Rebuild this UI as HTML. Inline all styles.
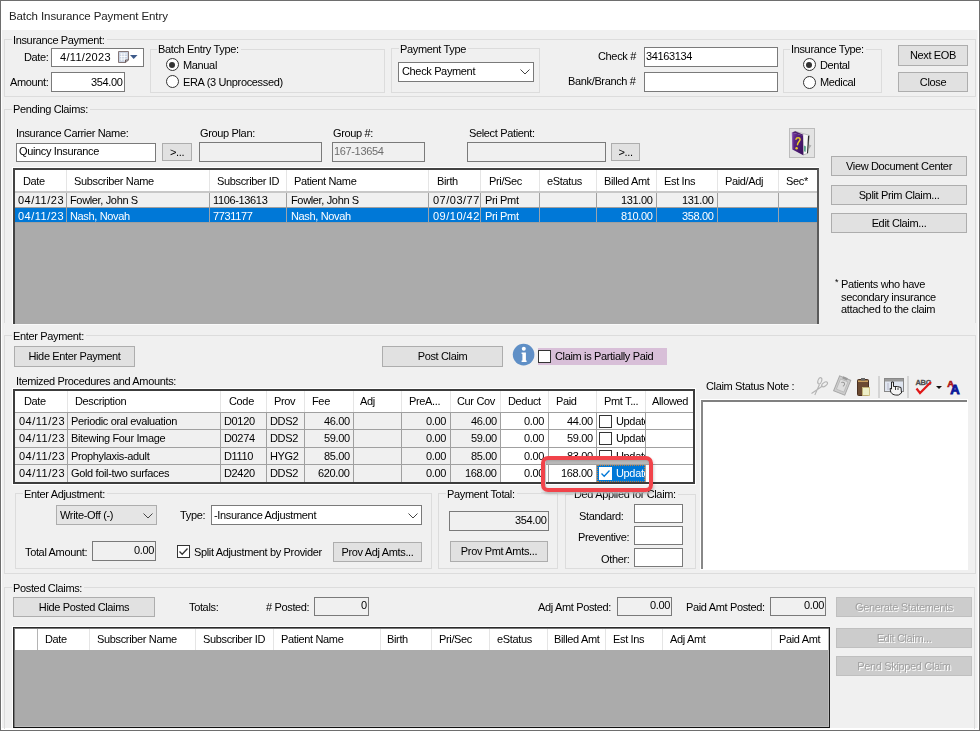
<!DOCTYPE html><html><head><meta charset="utf-8"><style>
html,body{margin:0;padding:0;}
body{width:980px;height:731px;position:relative;overflow:hidden;background:#f0f0f0;font-family:"Liberation Sans",sans-serif;font-size:11px;color:#000;}
.t{position:absolute;white-space:nowrap;line-height:13px;letter-spacing:-0.35px;will-change:transform;}
.btn{position:absolute;box-sizing:border-box;text-align:center;white-space:nowrap;letter-spacing:-0.35px;font-size:11px;will-change:transform;}
.radio{position:absolute;width:13px;height:13px;box-sizing:border-box;border:1px solid #333;border-radius:50%;background:#fff;}
.radio .dot{position:absolute;left:2.5px;top:2.5px;width:6px;height:6px;border-radius:50%;background:#333;}
</style></head><body>
<div style="position:absolute;left:0px;top:0px;width:980px;height:731px;box-sizing:border-box;border:1px solid #6e6e6e;background:#f0f0f0;"></div>
<div style="position:absolute;left:1px;top:1px;width:978px;height:29px;background:#ffffff;"></div>
<div style="position:absolute;left:1px;top:30px;width:1px;height:700px;background:#ffffff;"></div>
<div style="position:absolute;left:977px;top:30px;width:1px;height:700px;background:#f6f6f6;"></div>
<div style="position:absolute;left:978px;top:30px;width:1px;height:700px;background:#ffffff;"></div>
<div style="position:absolute;left:1px;top:728px;width:978px;height:2px;background:#ffffff;"></div>
<div class="t" style="top:10px;left:9px;color:#222;font-size:11.5px;letter-spacing:-0.1px;">Batch Insurance Payment Entry</div>
<div style="position:absolute;left:4px;top:39px;width:972px;height:58px;border:1px solid #dcdcdc;box-sizing:border-box;"></div>
<div class="t" style="top:34px;left:13px;background:#f0f0f0;padding:0 2px 0 1px;margin-left:-1px;">Insurance Payment:</div>
<div class="t" style="top:51px;right:931px;">Date:</div>
<div style="position:absolute;left:51px;top:48px;width:93px;height:19px;background:#fff;border:1px solid #7a7a7a;box-sizing:border-box;"></div>
<div class="t" style="top:51px;left:60px;letter-spacing:0.3px;">4/11/2023</div>
<svg style="position:absolute;left:117px;top:50px" width="22" height="14" viewBox="117 50 22 14">
<path d="M118.5 51.5 L128.5 51.5 L128.5 60 L125.5 62.5 L118.5 62.5 Z" fill="#c9d2e2" stroke="#857777" stroke-width="1"/>
<path d="M120 54 L127 54 M120 56.5 L127 56.5 M120 59 L127 59 M121.7 53 L121.7 61 M124.3 53 L124.3 61" stroke="#ffffff" stroke-width="0.8"/>
<path d="M125.5 62.5 L125.5 60 L128.5 60" fill="none" stroke="#6a5a5a" stroke-width="1"/>
<path d="M130 55 L137.5 55 L133.7 59 Z" fill="#3d5a8a"/>
</svg>
<div class="t" style="top:76px;right:931px;">Amount:</div>
<div style="position:absolute;left:51px;top:72px;width:74px;height:20px;background:#fff;border:1px solid #7a7a7a;box-sizing:border-box;"></div>
<div class="t" style="top:76px;right:857px;">354.00</div>
<div style="position:absolute;left:150px;top:49px;width:235px;height:44px;border:1px solid #dcdcdc;box-sizing:border-box;"></div>
<div class="t" style="top:43px;left:158px;background:#f0f0f0;padding:0 2px 0 1px;margin-left:-1px;">Batch Entry Type:</div>
<div class="radio" style="left:165.5px;top:58.0px;"><div class="dot"></div></div>
<div class="t" style="top:59px;left:183px;">Manual</div>
<div class="radio" style="left:165.5px;top:75.0px;"></div>
<div class="t" style="top:76px;left:183px;">ERA (3 Unprocessed)</div>
<div style="position:absolute;left:391px;top:48px;width:149px;height:45px;border:1px solid #dcdcdc;box-sizing:border-box;"></div>
<div class="t" style="top:43px;left:400px;background:#f0f0f0;padding:0 2px 0 1px;margin-left:-1px;">Payment Type</div>
<div style="position:absolute;left:398px;top:62px;width:136px;height:20px;background:#fff;border:1px solid #7a7a7a;box-sizing:border-box;"></div>
<div class="t" style="top:65px;left:402px;">Check Payment</div>
<svg style="position:absolute;left:519.5px;top:69px" width="10" height="6"><path d="M0.5 0.5 L5 5 L9.5 0.5" stroke="#444" stroke-width="1" fill="none"/></svg>
<div class="t" style="top:50px;right:344px;">Check #</div>
<div style="position:absolute;left:644px;top:47px;width:134px;height:20px;background:#fff;border:1px solid #7a7a7a;box-sizing:border-box;"></div>
<div class="t" style="top:50px;left:646px;">34163134</div>
<div class="t" style="top:75px;right:344px;">Bank/Branch #</div>
<div style="position:absolute;left:644px;top:72px;width:134px;height:20px;background:#fff;border:1px solid #7a7a7a;box-sizing:border-box;"></div>
<div style="position:absolute;left:783px;top:49px;width:99px;height:44px;border:1px solid #dcdcdc;box-sizing:border-box;"></div>
<div class="t" style="top:43px;left:791px;background:#f0f0f0;padding:0 2px 0 1px;margin-left:-1px;">Insurance Type:</div>
<div class="radio" style="left:802.5px;top:58.0px;"><div class="dot"></div></div>
<div class="t" style="top:59px;left:820px;">Dental</div>
<div class="radio" style="left:802.5px;top:75.5px;"></div>
<div class="t" style="top:76px;left:820px;">Medical</div>
<div class="btn" style="left:898px;top:45px;width:70px;height:21px;line-height:19px;background:#e1e1e1;border:1px solid #adadad;color:#000;">Next EOB</div>
<div class="btn" style="left:898px;top:72px;width:70px;height:20px;line-height:18px;background:#e1e1e1;border:1px solid #adadad;color:#000;">Close</div>
<div style="position:absolute;left:4px;top:109px;width:972px;height:214px;border:1px solid #dcdcdc;border-bottom:none;box-sizing:border-box;"></div>
<div class="t" style="top:103px;left:12.5px;background:#f0f0f0;padding:0 2px 0 1px;margin-left:-1px;">Pending Claims:</div>
<div class="t" style="top:127px;left:16px;">Insurance Carrier Name:</div>
<div style="position:absolute;left:16px;top:143px;width:140px;height:19px;background:#fff;border:1px solid #7a7a7a;box-sizing:border-box;"></div>
<div class="t" style="top:145px;left:19px;">Quincy Insurance</div>
<div class="btn" style="left:162px;top:143px;width:30px;height:18px;line-height:16px;background:#e1e1e1;border:1px solid #adadad;color:#000;">&gt;...</div>
<div class="t" style="top:127px;left:200px;">Group Plan:</div>
<div style="position:absolute;left:199px;top:142px;width:123px;height:20px;background:#f0f0f0;border:1px solid #7a7a7a;box-sizing:border-box;"></div>
<div class="t" style="top:127px;left:333px;">Group #:</div>
<div style="position:absolute;left:332px;top:142px;width:93px;height:20px;background:#f0f0f0;border:1px solid #7a7a7a;box-sizing:border-box;"></div>
<div class="t" style="top:145px;left:334px;color:#6d6d6d;">167-13654</div>
<div class="t" style="top:127px;left:469px;">Select Patient:</div>
<div style="position:absolute;left:467px;top:142px;width:139px;height:20px;background:#f0f0f0;border:1px solid #7a7a7a;box-sizing:border-box;"></div>
<div class="btn" style="left:611px;top:143px;width:29px;height:18px;line-height:16px;background:#e1e1e1;border:1px solid #adadad;color:#000;">&gt;...</div>
<div style="position:absolute;left:789px;top:128px;width:26px;height:30px;background:#e3e3e3;border:1px solid #bcbcbc;box-sizing:border-box;"></div>
<svg style="position:absolute;left:786px;top:125px" width="32" height="36" viewBox="0 0 32 36">
<defs><linearGradient id="bk" x1="0" y1="0" x2="1" y2="0.6"><stop offset="0" stop-color="#7d45a8"/><stop offset="0.35" stop-color="#5b2585"/><stop offset="1" stop-color="#3f1462"/></linearGradient></defs>
<path d="M23 19.5 L25.5 20.5 L23 24 Z" fill="#b0b0b0"/>
<path d="M9 6.3 L23.3 10.3 L21.8 28.2 L17.3 30 L17 10.6 Z" fill="#f6f6f6" stroke="#8a8a8a" stroke-width="0.5"/>
<path d="M22 10.8 L23.3 10.8 L22 28 L21 28.4 Z" fill="#2a2a2a"/>
<path d="M18 20.5 L20 21.5 L19.6 27 L18 26.2 Z" fill="#5aa88a"/>
<path d="M5.8 7.4 L9 6.3 L17.5 9.8 L17 10.6 Z" fill="#4e1f70"/>
<path d="M5.8 7.4 L17 10.6 L17.3 30.2 L6.4 24.4 Z" fill="url(#bk)"/>
<path d="M6.2 8 L7 8.3 L7.3 24.2 L6.5 23.9 Z" fill="#9a6cc0" opacity="0.8"/>
<path d="M10 14.3 C10.2 12.2 14 12 14.1 14.3 C14.2 16.2 11.7 16.8 11.5 19.8" stroke="#e8cc28" stroke-width="1.5" fill="none" stroke-linecap="round"/>
<circle cx="10.6" cy="23.3" r="1.2" fill="#e8cc28"/>
</svg>
<div class="btn" style="left:831px;top:156px;width:136px;height:20px;line-height:18px;background:#e1e1e1;border:1px solid #adadad;color:#000;">View Document Center</div>
<div class="btn" style="left:831px;top:185px;width:136px;height:20px;line-height:18px;background:#e1e1e1;border:1px solid #adadad;color:#000;">Split Prim Claim...</div>
<div class="btn" style="left:831px;top:213px;width:136px;height:20px;line-height:18px;background:#e1e1e1;border:1px solid #adadad;color:#000;">Edit Claim...</div>
<div class="t" style="top:276px;left:835px;font-size:9px;">*</div>
<div class="t" style="top:278px;left:841px;">Patients who have</div>
<div class="t" style="top:291px;left:841px;">secondary insurance</div>
<div class="t" style="top:303px;left:841px;">attached to the claim</div>
<div style="position:absolute;left:12px;top:167px;width:807px;height:157px;background:#ffffff;"></div>
<div style="position:absolute;left:13px;top:324px;width:806px;height:1px;background:#f8f8f8;"></div>
<div style="position:absolute;left:13px;top:168px;width:806px;height:156px;background:#ababab;border-top:2px solid #434343;border-left:2px solid #434343;border-right:2px solid #5a5a5a;box-sizing:border-box;"></div>
<div style="position:absolute;left:15px;top:170px;width:802px;height:21px;background:#ffffff;"></div>
<div style="position:absolute;left:66px;top:170px;width:1px;height:21px;background:#e5e5e5;"></div>
<div style="position:absolute;left:209px;top:170px;width:1px;height:21px;background:#e5e5e5;"></div>
<div style="position:absolute;left:286px;top:170px;width:1px;height:21px;background:#e5e5e5;"></div>
<div style="position:absolute;left:428px;top:170px;width:1px;height:21px;background:#e5e5e5;"></div>
<div style="position:absolute;left:480px;top:170px;width:1px;height:21px;background:#e5e5e5;"></div>
<div style="position:absolute;left:539px;top:170px;width:1px;height:21px;background:#e5e5e5;"></div>
<div style="position:absolute;left:596px;top:170px;width:1px;height:21px;background:#e5e5e5;"></div>
<div style="position:absolute;left:656px;top:170px;width:1px;height:21px;background:#e5e5e5;"></div>
<div style="position:absolute;left:717px;top:170px;width:1px;height:21px;background:#e5e5e5;"></div>
<div style="position:absolute;left:778px;top:170px;width:1px;height:21px;background:#e5e5e5;"></div>
<div class="t" style="top:175px;left:22.5px;">Date</div>
<div class="t" style="top:175px;left:73.5px;">Subscriber Name</div>
<div class="t" style="top:175px;left:216.5px;">Subscriber ID</div>
<div class="t" style="top:175px;left:294px;">Patient Name</div>
<div class="t" style="top:175px;left:436.5px;">Birth</div>
<div class="t" style="top:175px;left:488.5px;">Pri/Sec</div>
<div class="t" style="top:175px;left:546.5px;">eStatus</div>
<div class="t" style="top:175px;left:603.5px;">Billed Amt</div>
<div class="t" style="top:175px;left:664px;">Est Ins</div>
<div class="t" style="top:175px;left:725px;">Paid/Adj</div>
<div class="t" style="top:175px;left:785.5px;">Sec*</div>
<div style="position:absolute;left:15px;top:191px;width:802px;height:2px;background:#c8c8c8;"></div>
<div style="position:absolute;left:15px;top:193px;width:802px;height:14px;background:#f0f0f0;"></div>
<div style="position:absolute;left:15px;top:207px;width:802px;height:1px;background:#a0a0a0;"></div>
<div style="position:absolute;left:15px;top:208px;width:802px;height:14px;background:#0078d7;"></div>
<div style="position:absolute;left:15px;top:222px;width:802px;height:1px;background:#a0a0a0;"></div>
<div style="position:absolute;left:66px;top:193px;width:1px;height:14px;background:#a0a0a0;"></div>
<div style="position:absolute;left:66px;top:208px;width:1px;height:14px;background:#9aa4ae;"></div>
<div style="position:absolute;left:209px;top:193px;width:1px;height:14px;background:#a0a0a0;"></div>
<div style="position:absolute;left:209px;top:208px;width:1px;height:14px;background:#9aa4ae;"></div>
<div style="position:absolute;left:286px;top:193px;width:1px;height:14px;background:#a0a0a0;"></div>
<div style="position:absolute;left:286px;top:208px;width:1px;height:14px;background:#9aa4ae;"></div>
<div style="position:absolute;left:428px;top:193px;width:1px;height:14px;background:#a0a0a0;"></div>
<div style="position:absolute;left:428px;top:208px;width:1px;height:14px;background:#9aa4ae;"></div>
<div style="position:absolute;left:480px;top:193px;width:1px;height:14px;background:#a0a0a0;"></div>
<div style="position:absolute;left:480px;top:208px;width:1px;height:14px;background:#9aa4ae;"></div>
<div style="position:absolute;left:539px;top:193px;width:1px;height:14px;background:#a0a0a0;"></div>
<div style="position:absolute;left:539px;top:208px;width:1px;height:14px;background:#9aa4ae;"></div>
<div style="position:absolute;left:596px;top:193px;width:1px;height:14px;background:#a0a0a0;"></div>
<div style="position:absolute;left:596px;top:208px;width:1px;height:14px;background:#9aa4ae;"></div>
<div style="position:absolute;left:656px;top:193px;width:1px;height:14px;background:#a0a0a0;"></div>
<div style="position:absolute;left:656px;top:208px;width:1px;height:14px;background:#9aa4ae;"></div>
<div style="position:absolute;left:717px;top:193px;width:1px;height:14px;background:#a0a0a0;"></div>
<div style="position:absolute;left:717px;top:208px;width:1px;height:14px;background:#9aa4ae;"></div>
<div style="position:absolute;left:778px;top:193px;width:1px;height:14px;background:#a0a0a0;"></div>
<div style="position:absolute;left:778px;top:208px;width:1px;height:14px;background:#9aa4ae;"></div>
<div class="t" style="top:194px;left:18px;letter-spacing:0.5px;">04/11/23</div>
<div class="t" style="top:194px;left:70px;">Fowler, John S</div>
<div class="t" style="top:194px;left:212.5px;">1106-13613</div>
<div class="t" style="top:194px;left:290.5px;">Fowler, John S</div>
<div class="t" style="top:194px;left:432.5px;letter-spacing:0.5px;">07/03/77</div>
<div class="t" style="top:194px;left:485px;">Pri Pmt</div>
<div class="t" style="top:194px;right:327px;">131.00</div>
<div class="t" style="top:194px;right:266px;">131.00</div>
<div class="t" style="top:210px;left:18px;color:#ffffff;letter-spacing:0.5px;">04/11/23</div>
<div class="t" style="top:210px;left:70px;color:#ffffff;">Nash, Novah</div>
<div class="t" style="top:210px;left:212.5px;color:#ffffff;">7731177</div>
<div class="t" style="top:210px;left:290.5px;color:#ffffff;">Nash, Novah</div>
<div class="t" style="top:210px;left:432.5px;color:#ffffff;letter-spacing:0.5px;">09/10/42</div>
<div class="t" style="top:210px;left:485px;color:#ffffff;">Pri Pmt</div>
<div class="t" style="top:210px;right:327px;color:#ffffff;">810.00</div>
<div class="t" style="top:210px;right:266px;color:#ffffff;">358.00</div>
<div style="position:absolute;left:4px;top:335px;width:972px;height:239px;border:1px solid #dcdcdc;box-sizing:border-box;"></div>
<div class="t" style="top:330px;left:13px;background:#f0f0f0;padding:0 2px 0 1px;margin-left:-1px;">Enter Payment:</div>
<div class="btn" style="left:14px;top:346px;width:121px;height:21px;line-height:19px;background:#e1e1e1;border:1px solid #adadad;color:#000;">Hide Enter Payment</div>
<div class="btn" style="left:382px;top:346px;width:121px;height:21px;line-height:19px;background:#e1e1e1;border:1px solid #adadad;color:#000;">Post Claim</div>
<svg style="position:absolute;left:512px;top:343px" width="24" height="24" viewBox="0 0 24 24">
<circle cx="11.6" cy="11.6" r="10.8" fill="#5f8fc6"/>
<circle cx="11.8" cy="5.8" r="2" fill="#fff"/>
<path d="M9.6 9.6 L13.9 9.6 L13.9 17.6 L14.6 17.6 L14.6 19 L9.6 19 L9.6 17.6 L10.4 17.6 L10.4 11 L9.6 11 Z" fill="#fff"/>
</svg>
<div style="position:absolute;left:538px;top:348px;width:129px;height:17px;background:#d8bfd8;"></div>
<div style="position:absolute;left:538px;top:350px;width:13px;height:13px;box-sizing:border-box;border:1px solid #333;background:#fff;"></div>
<div class="t" style="top:350px;left:555px;">Claim is Partially Paid</div>
<div class="t" style="top:375px;left:16px;">Itemized Procedures and Amounts:</div>
<div style="position:absolute;left:12px;top:388px;width:684px;height:97px;background:#ffffff;"></div>
<div style="position:absolute;left:13px;top:389px;width:682px;height:95px;background:#ffffff;border:2px solid #3c3c3c;box-sizing:border-box;"></div>
<div style="position:absolute;left:67px;top:391px;width:1px;height:21px;background:#e5e5e5;"></div>
<div style="position:absolute;left:220px;top:391px;width:1px;height:21px;background:#e5e5e5;"></div>
<div style="position:absolute;left:266px;top:391px;width:1px;height:21px;background:#e5e5e5;"></div>
<div style="position:absolute;left:304px;top:391px;width:1px;height:21px;background:#e5e5e5;"></div>
<div style="position:absolute;left:353px;top:391px;width:1px;height:21px;background:#e5e5e5;"></div>
<div style="position:absolute;left:401px;top:391px;width:1px;height:21px;background:#e5e5e5;"></div>
<div style="position:absolute;left:450px;top:391px;width:1px;height:21px;background:#e5e5e5;"></div>
<div style="position:absolute;left:500px;top:391px;width:1px;height:21px;background:#e5e5e5;"></div>
<div style="position:absolute;left:548px;top:391px;width:1px;height:21px;background:#e5e5e5;"></div>
<div style="position:absolute;left:596px;top:391px;width:1px;height:21px;background:#e5e5e5;"></div>
<div style="position:absolute;left:645px;top:391px;width:1px;height:21px;background:#e5e5e5;"></div>
<div class="t" style="top:395px;left:23.5px;">Date</div>
<div class="t" style="top:395px;left:74.5px;">Description</div>
<div class="t" style="top:395px;left:228.5px;">Code</div>
<div class="t" style="top:395px;left:274px;">Prov</div>
<div class="t" style="top:395px;left:312px;">Fee</div>
<div class="t" style="top:395px;left:360px;">Adj</div>
<div class="t" style="top:395px;left:409px;">PreA...</div>
<div class="t" style="top:395px;left:457px;">Cur Cov</div>
<div class="t" style="top:395px;left:507.5px;">Deduct</div>
<div class="t" style="top:395px;left:556px;">Paid</div>
<div class="t" style="top:395px;left:604px;">Pmt T...</div>
<div class="t" style="top:395px;left:651.5px;">Allowed</div>
<div style="position:absolute;left:15px;top:413px;width:485px;height:16px;background:#f0f0f0;"></div>
<div style="position:absolute;left:15px;top:430px;width:485px;height:17px;background:#f0f0f0;"></div>
<div style="position:absolute;left:15px;top:448px;width:485px;height:16px;background:#f0f0f0;"></div>
<div style="position:absolute;left:15px;top:465px;width:485px;height:17px;background:#f0f0f0;"></div>
<div style="position:absolute;left:15px;top:412px;width:678px;height:1px;background:#a0a0a0;"></div>
<div style="position:absolute;left:15px;top:429px;width:678px;height:1px;background:#a0a0a0;"></div>
<div style="position:absolute;left:15px;top:447px;width:678px;height:1px;background:#a0a0a0;"></div>
<div style="position:absolute;left:15px;top:464px;width:678px;height:1px;background:#a0a0a0;"></div>
<div style="position:absolute;left:67px;top:412px;width:1px;height:70px;background:#a0a0a0;"></div>
<div style="position:absolute;left:220px;top:412px;width:1px;height:70px;background:#a0a0a0;"></div>
<div style="position:absolute;left:266px;top:412px;width:1px;height:70px;background:#a0a0a0;"></div>
<div style="position:absolute;left:304px;top:412px;width:1px;height:70px;background:#a0a0a0;"></div>
<div style="position:absolute;left:353px;top:412px;width:1px;height:70px;background:#a0a0a0;"></div>
<div style="position:absolute;left:401px;top:412px;width:1px;height:70px;background:#a0a0a0;"></div>
<div style="position:absolute;left:450px;top:412px;width:1px;height:70px;background:#a0a0a0;"></div>
<div style="position:absolute;left:500px;top:412px;width:1px;height:70px;background:#a0a0a0;"></div>
<div style="position:absolute;left:548px;top:412px;width:1px;height:70px;background:#a0a0a0;"></div>
<div style="position:absolute;left:596px;top:412px;width:1px;height:70px;background:#a0a0a0;"></div>
<div style="position:absolute;left:645px;top:412px;width:1px;height:70px;background:#a0a0a0;"></div>
<div class="t" style="top:415px;left:19px;letter-spacing:0.5px;">04/11/23</div>
<div class="t" style="top:415px;left:71px;">Periodic oral evaluation</div>
<div class="t" style="top:415px;left:224px;">D0120</div>
<div class="t" style="top:415px;left:270px;">DDS2</div>
<div class="t" style="top:415px;right:630.5px;">46.00</div>
<div class="t" style="top:415px;right:533.5px;">0.00</div>
<div class="t" style="top:415px;right:483.5px;">46.00</div>
<div class="t" style="top:415px;right:436px;">0.00</div>
<div class="t" style="top:415px;right:387px;">44.00</div>
<div class="t" style="top:432px;left:19px;letter-spacing:0.5px;">04/11/23</div>
<div class="t" style="top:432px;left:71px;">Bitewing Four Image</div>
<div class="t" style="top:432px;left:224px;">D0274</div>
<div class="t" style="top:432px;left:270px;">DDS2</div>
<div class="t" style="top:432px;right:630.5px;">59.00</div>
<div class="t" style="top:432px;right:533.5px;">0.00</div>
<div class="t" style="top:432px;right:483.5px;">59.00</div>
<div class="t" style="top:432px;right:436px;">0.00</div>
<div class="t" style="top:432px;right:387px;">59.00</div>
<div class="t" style="top:450px;left:19px;letter-spacing:0.5px;">04/11/23</div>
<div class="t" style="top:450px;left:71px;">Prophylaxis-adult</div>
<div class="t" style="top:450px;left:224px;">D1110</div>
<div class="t" style="top:450px;left:270px;">HYG2</div>
<div class="t" style="top:450px;right:630.5px;">85.00</div>
<div class="t" style="top:450px;right:533.5px;">0.00</div>
<div class="t" style="top:450px;right:483.5px;">85.00</div>
<div class="t" style="top:450px;right:436px;">0.00</div>
<div class="t" style="top:450px;right:387px;">83.00</div>
<div class="t" style="top:467px;left:19px;letter-spacing:0.5px;">04/11/23</div>
<div class="t" style="top:467px;left:71px;">Gold foil-two surfaces</div>
<div class="t" style="top:467px;left:224px;">D2420</div>
<div class="t" style="top:467px;left:270px;">DDS2</div>
<div class="t" style="top:467px;right:630.5px;">620.00</div>
<div class="t" style="top:467px;right:533.5px;">0.00</div>
<div class="t" style="top:467px;right:483.5px;">168.00</div>
<div class="t" style="top:467px;right:436px;">0.00</div>
<div class="t" style="top:467px;right:387px;">168.00</div>
<div style="position:absolute;left:599px;top:415px;width:13px;height:13px;box-sizing:border-box;border:1px solid #333;background:#fff;"></div>
<div style="position:absolute;left:613px;top:413px;width:32px;height:16px;overflow:hidden;"><div class="t" style="left:3px;top:2px;">Update</div></div>
<div style="position:absolute;left:599px;top:432px;width:13px;height:13px;box-sizing:border-box;border:1px solid #333;background:#fff;"></div>
<div style="position:absolute;left:613px;top:430px;width:32px;height:16px;overflow:hidden;"><div class="t" style="left:3px;top:2px;">Update</div></div>
<div style="position:absolute;left:599px;top:450px;width:13px;height:13px;box-sizing:border-box;border:1px solid #333;background:#fff;"></div>
<div style="position:absolute;left:613px;top:448px;width:32px;height:16px;overflow:hidden;"><div class="t" style="left:3px;top:2px;">Update</div></div>
<div style="position:absolute;left:597px;top:465px;width:48px;height:17px;background:#0078d7;outline:1px dotted #c08040;outline-offset:-1px;"></div>
<div style="position:absolute;left:599px;top:467px;width:13px;height:13px;box-sizing:border-box;border:1px solid #ffffff;background:#fff;"><svg width="13" height="13" style="position:absolute;left:-1px;top:-1px"><path d="M2.5 6.5 L5.2 9.3 L10.5 3.5" stroke="#0078d7" stroke-width="1.3" fill="none"/></svg></div>
<div style="position:absolute;left:613px;top:465px;width:32px;height:16px;overflow:hidden;"><div class="t" style="left:3px;top:2px;color:#fff;">Update</div></div>
<div class="t" style="top:380px;left:706px;">Claim Status Note :</div>
<svg style="position:absolute;left:806px;top:370px" width="164" height="30" viewBox="806 370 164 30">
<g stroke="#b4b4b4" stroke-width="1.1" fill="none">
<ellipse cx="819.8" cy="380.8" rx="1.8" ry="3.3" transform="rotate(20 819.8 380.8)"/>
<ellipse cx="824.6" cy="384.3" rx="1.8" ry="3.3" transform="rotate(55 824.6 384.3)"/>
<path d="M819.5 384.5 L814.8 395 M822.5 386 L811.5 393.5"/>
</g>
<g transform="rotate(22 842 386)">
<rect x="836" y="377.5" width="12" height="16" fill="#cdcdcd" stroke="#a8a8a8" stroke-width="1"/>
<rect x="838" y="380" width="8" height="11" fill="#dedede" stroke="#b0b0b0" stroke-width="0.6"/>
<rect x="839.5" y="376.5" width="5" height="2.5" fill="#9a9a9a"/>
<path d="M840 383 C843 381 845 383 843 386" stroke="#999" stroke-width="1" fill="none"/>
</g>
<rect x="857.5" y="379.5" width="11" height="16" rx="1" fill="#6b4a32" stroke="#4a3020" stroke-width="1"/>
<rect x="858" y="380.5" width="10" height="1.5" fill="#c8a060"/>
<rect x="861" y="378" width="4" height="2.5" fill="#666" />
<rect x="862.5" y="387.5" width="7" height="8" fill="#eef0c8" stroke="#c8b878" stroke-width="0.8"/>
<rect x="878.5" y="376" width="1" height="22" fill="#b8b8b8"/>
<rect x="884.5" y="378.5" width="19" height="13" fill="#dfe5f0" stroke="#888" stroke-width="1"/>
<rect x="885" y="379" width="18" height="2.5" fill="#9a9a9a"/>
<path d="M888 383 L888 390 M893 383 L893 390" stroke="#aab" stroke-width="0.8"/>
<path d="M891.5 382 L891.5 389 L890 388.5 L890.5 391 C891 394 894 395.5 898.5 395 L901.5 393 L901 387.5 L897.5 386.5 L893.5 386.5 L893.5 382 Z" fill="#f4f4f4" stroke="#111" stroke-width="0.9"/>
<path d="M895.5 387 L895.5 390 M898 387.5 L898 390" stroke="#111" stroke-width="0.8"/>
<rect x="907.5" y="376" width="1" height="22" fill="#b8b8b8"/>
<text x="915.5" y="385" font-family="Liberation Sans" font-weight="bold" font-size="7.5" fill="#505050" stroke="#505050" stroke-width="0.3" letter-spacing="-0.3">ABC</text>
<path d="M916.5 388.5 L920 393 L931 382" stroke="#e01818" stroke-width="2.2" fill="none"/>
<path d="M936 386 L942 386 L939 389 Z" fill="#111"/>
<text x="947.3" y="386.8" font-family="Liberation Sans" font-weight="bold" font-size="9.5" fill="#c41818" stroke="#a01010" stroke-width="0.6">A</text>
<text x="950.3" y="394" font-family="Liberation Sans" font-weight="bold" font-size="13" fill="#1020b0" stroke="#0a1690" stroke-width="0.9">A</text>
</svg>
<div style="position:absolute;left:700px;top:399px;width:268px;height:171px;background:#ffffff;"></div>
<div style="position:absolute;left:701px;top:400px;width:266px;height:169px;background:#ffffff;border-top:2px solid #808080;border-left:2px solid #888;box-sizing:border-box;"></div>
<div style="position:absolute;left:15px;top:493px;width:417px;height:76px;border:1px solid #dcdcdc;box-sizing:border-box;"></div>
<div class="t" style="top:488px;left:24px;background:#f0f0f0;padding:0 2px 0 1px;margin-left:-1px;">Enter Adjustment:</div>
<div style="position:absolute;left:56px;top:505px;width:101px;height:20px;background:#e5e5e5;border:1px solid #adadad;box-sizing:border-box;"></div>
<div class="t" style="top:509px;left:60px;">Write-Off (-)</div>
<svg style="position:absolute;left:143px;top:513px" width="10" height="6"><path d="M0.5 0.5 L5 5 L9.5 0.5" stroke="#444" stroke-width="1" fill="none"/></svg>
<div class="t" style="top:509px;left:180px;">Type:</div>
<div style="position:absolute;left:211px;top:505px;width:211px;height:20px;background:#fff;border:1px solid #7a7a7a;box-sizing:border-box;"></div>
<div class="t" style="top:509px;left:214px;">-Insurance Adjustment</div>
<svg style="position:absolute;left:408px;top:513px" width="10" height="6"><path d="M0.5 0.5 L5 5 L9.5 0.5" stroke="#444" stroke-width="1" fill="none"/></svg>
<div class="t" style="top:546px;left:25px;">Total Amount:</div>
<div style="position:absolute;left:92px;top:541px;width:64px;height:20px;background:#f0f0f0;border:1px solid #7a7a7a;box-sizing:border-box;"></div>
<div class="t" style="top:544px;right:826px;">0.00</div>
<div style="position:absolute;left:177px;top:545px;width:13px;height:13px;box-sizing:border-box;border:1px solid #333;background:#fff;"><svg width="13" height="13" style="position:absolute;left:-1px;top:-1px"><path d="M2.5 6.5 L5.2 9.3 L10.5 3.5" stroke="#333" stroke-width="1.3" fill="none"/></svg></div>
<div class="t" style="top:546px;left:193.5px;">Split Adjustment by Provider</div>
<div class="btn" style="left:333px;top:542px;width:89px;height:20px;line-height:18px;background:#e1e1e1;border:1px solid #adadad;color:#000;">Prov Adj Amts...</div>
<div style="position:absolute;left:438px;top:493px;width:120px;height:76px;border:1px solid #dcdcdc;box-sizing:border-box;"></div>
<div class="t" style="top:488px;left:447px;background:#f0f0f0;padding:0 2px 0 1px;margin-left:-1px;">Payment Total:</div>
<div style="position:absolute;left:449px;top:511px;width:100px;height:20px;background:#f0f0f0;border:1px solid #7a7a7a;box-sizing:border-box;"></div>
<div class="t" style="top:514px;right:433px;">354.00</div>
<div class="btn" style="left:450px;top:541px;width:98px;height:21px;line-height:19px;background:#e1e1e1;border:1px solid #adadad;color:#000;">Prov Pmt Amts...</div>
<div style="position:absolute;left:565px;top:494px;width:131px;height:75px;border:1px solid #dcdcdc;box-sizing:border-box;"></div>
<div class="t" style="top:488px;left:574px;background:#f0f0f0;padding:0 2px 0 1px;margin-left:-1px;">Ded Applied for Claim:</div>
<div class="t" style="top:510px;right:356px;">Standard:</div>
<div style="position:absolute;left:634px;top:504px;width:49px;height:19px;background:#fff;border:1px solid #7a7a7a;box-sizing:border-box;"></div>
<div class="t" style="top:531px;right:351px;">Preventive:</div>
<div style="position:absolute;left:634px;top:526px;width:49px;height:19px;background:#fff;border:1px solid #7a7a7a;box-sizing:border-box;"></div>
<div class="t" style="top:553px;right:351px;">Other:</div>
<div style="position:absolute;left:634px;top:548px;width:49px;height:19px;background:#fff;border:1px solid #7a7a7a;box-sizing:border-box;"></div>
<div style="position:absolute;left:545px;top:460px;width:104px;height:4px;background:#b8b8b8;"></div>
<div style="position:absolute;left:545px;top:460px;width:1px;height:28px;background:#d8d8d8;"></div>
<div style="position:absolute;left:541px;top:492px;width:113px;height:3px;background:linear-gradient(#dcdcdc,#f0f0f000);"></div>
<div style="position:absolute;left:541px;top:456px;width:112px;height:36px;border:4px solid #f1434a;border-radius:7px;box-shadow:1px 2px 3px rgba(0,0,0,0.18), inset 1px 1px 2px rgba(0,0,0,0.12);box-sizing:border-box;"></div>
<div style="position:absolute;left:4px;top:587px;width:971px;height:142px;border:1px solid #dcdcdc;border-bottom:none;box-sizing:border-box;"></div>
<div class="t" style="top:582px;left:13px;background:#f0f0f0;padding:0 2px 0 1px;margin-left:-1px;">Posted Claims:</div>
<div class="btn" style="left:13px;top:597px;width:142px;height:20px;line-height:18px;background:#e1e1e1;border:1px solid #adadad;color:#000;">Hide Posted Claims</div>
<div class="t" style="top:601px;left:189px;">Totals:</div>
<div class="t" style="top:601px;left:266px;"># Posted:</div>
<div style="position:absolute;left:314px;top:597px;width:55px;height:19px;background:#f0f0f0;border:1px solid #7a7a7a;box-sizing:border-box;"></div>
<div class="t" style="top:599px;right:613px;">0</div>
<div class="t" style="top:601px;left:538px;">Adj Amt Posted:</div>
<div style="position:absolute;left:617px;top:597px;width:55px;height:19px;background:#f0f0f0;border:1px solid #7a7a7a;box-sizing:border-box;"></div>
<div class="t" style="top:599px;right:310px;">0.00</div>
<div class="t" style="top:601px;left:686px;">Paid Amt Posted:</div>
<div style="position:absolute;left:770px;top:597px;width:56px;height:19px;background:#f0f0f0;border:1px solid #7a7a7a;box-sizing:border-box;"></div>
<div class="t" style="top:599px;right:156px;">0.00</div>
<div class="btn" style="left:836px;top:597px;width:136px;height:20px;line-height:18px;background:#cccccc;border:1px solid #bfbfbf;color:#a0a0a0;text-shadow:1px 1px 0 #ffffff;">Generate Statements</div>
<div class="btn" style="left:836px;top:628px;width:136px;height:20px;line-height:18px;background:#cccccc;border:1px solid #bfbfbf;color:#a0a0a0;text-shadow:1px 1px 0 #ffffff;">Edit Claim...</div>
<div class="btn" style="left:836px;top:656px;width:136px;height:20px;line-height:18px;background:#cccccc;border:1px solid #bfbfbf;color:#a0a0a0;text-shadow:1px 1px 0 #ffffff;">Pend Skipped Claim</div>
<div style="position:absolute;left:12px;top:626px;width:818px;height:102px;background:#ffffff;"></div>
<div style="position:absolute;left:13px;top:728px;width:817px;height:1px;background:#f8f8f8;"></div>
<div style="position:absolute;left:13px;top:627px;width:817px;height:101px;background:#ababab;border-top:1px solid #2a2a2a;border-left:1px solid #2a2a2a;border-right:1px solid #1e1e1e;border-bottom:1px solid #111;box-sizing:border-box;"></div>
<div style="position:absolute;left:14px;top:628px;width:815px;height:1px;background:#777;"></div>
<div style="position:absolute;left:14px;top:628px;width:1px;height:99px;background:#777;"></div>
<div style="position:absolute;left:828px;top:629px;width:1px;height:98px;background:#bdbdbd;"></div>
<div style="position:absolute;left:15px;top:726px;width:814px;height:1px;background:#bdbdbd;"></div>
<div style="position:absolute;left:15px;top:629px;width:813px;height:21px;background:#ffffff;"></div>
<div style="position:absolute;left:37px;top:629px;width:1px;height:21px;background:#b4b4b4;"></div>
<div style="position:absolute;left:89px;top:629px;width:1px;height:21px;background:#e5e5e5;"></div>
<div style="position:absolute;left:195px;top:629px;width:1px;height:21px;background:#e5e5e5;"></div>
<div style="position:absolute;left:273px;top:629px;width:1px;height:21px;background:#e5e5e5;"></div>
<div style="position:absolute;left:380px;top:629px;width:1px;height:21px;background:#e5e5e5;"></div>
<div style="position:absolute;left:431px;top:629px;width:1px;height:21px;background:#e5e5e5;"></div>
<div style="position:absolute;left:489px;top:629px;width:1px;height:21px;background:#e5e5e5;"></div>
<div style="position:absolute;left:547px;top:629px;width:1px;height:21px;background:#e5e5e5;"></div>
<div style="position:absolute;left:605px;top:629px;width:1px;height:21px;background:#e5e5e5;"></div>
<div style="position:absolute;left:662px;top:629px;width:1px;height:21px;background:#e5e5e5;"></div>
<div style="position:absolute;left:771px;top:629px;width:1px;height:21px;background:#e5e5e5;"></div>
<div class="t" style="top:633px;left:44.5px;">Date</div>
<div class="t" style="top:633px;left:97px;">Subscriber Name</div>
<div class="t" style="top:633px;left:203px;">Subscriber ID</div>
<div class="t" style="top:633px;left:280.5px;">Patient Name</div>
<div class="t" style="top:633px;left:386.5px;">Birth</div>
<div class="t" style="top:633px;left:439px;">Pri/Sec</div>
<div class="t" style="top:633px;left:496.5px;">eStatus</div>
<div class="t" style="top:633px;left:554px;">Billed Amt</div>
<div class="t" style="top:633px;left:612.5px;">Est Ins</div>
<div class="t" style="top:633px;left:669.5px;">Adj Amt</div>
<div class="t" style="top:633px;left:778.5px;">Paid Amt</div>
</body></html>
